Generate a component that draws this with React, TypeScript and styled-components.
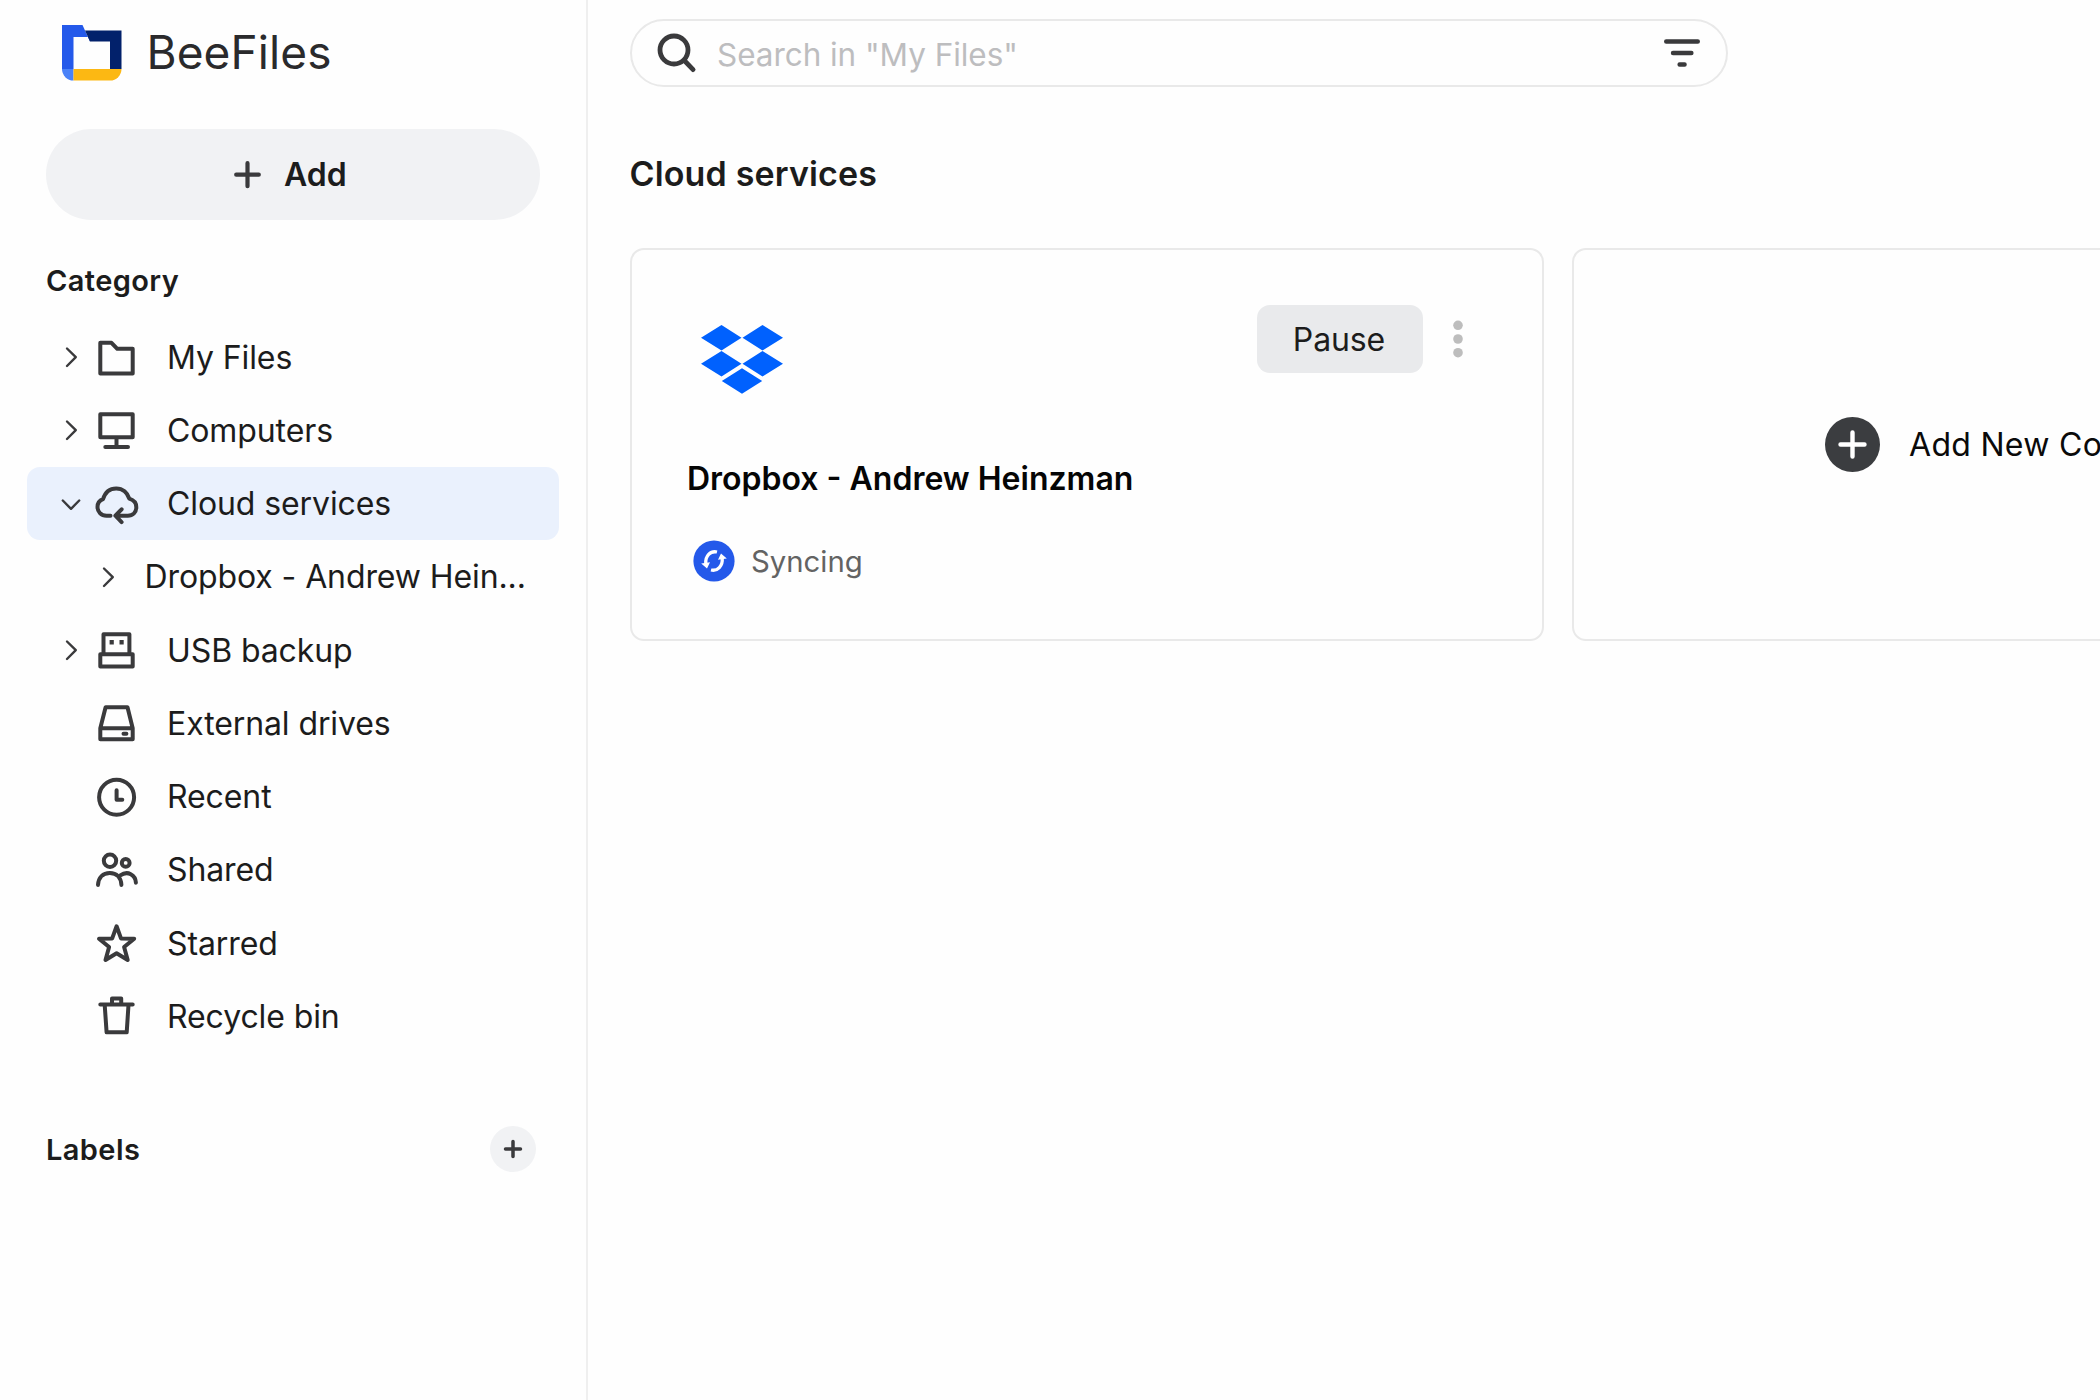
import React from "react";
import styled, { createGlobalStyle } from "styled-components";

const Global = createGlobalStyle`
  * { box-sizing: border-box; }
  html, body { margin: 0; background: #fefefe; overflow: hidden; }
  button { font: inherit; border: 0; padding: 0; background: none; color: inherit; }
`;

const Page = styled.div`
  display: flex;
  width: 2100px;
  height: 1400px;
  overflow: hidden;
  background: #fefefe;
  color: #1c1c1c;
  font-family: Inter, "Liberation Sans", sans-serif;
  font-size: 32px;
  line-height: 1;
`;

const Sidebar = styled.aside`
  flex: none;
  width: 588px;
  border-right: 2px solid #efefef;
`;

const Brand = styled.div`
  display: flex;
  align-items: center;
  gap: 24.5px;
  height: 106px;
  padding-left: 62px;
`;

const BrandName = styled.span`
  padding-bottom: 2px;
  font-size: 46px;
  letter-spacing: 0.1px;
  color: #2a2a2c;
`;

const AddButton = styled.button`
  display: flex;
  align-items: center;
  gap: 23.5px;
  width: 494px;
  height: 91px;
  margin: 23px 0 0 46px;
  padding: 0 0 0 187.5px;
  border-radius: 46px;
  background: #f1f2f4;
  font-weight: 600;
`;

const SectionTitle = styled.h2`
  margin: 0;
  font-size: 29px;
  font-weight: 600;
  letter-spacing: 0.4px;
`;

const CategoryHeader = styled.div`
  padding: 45.5px 0 0 46px;
  height: 100.5px;
`;

const Nav = styled.nav`
  display: flex;
  flex-direction: column;
  padding: 0 27.5px 0 27px;
`;

const NavRow = styled.div<{ $active?: boolean; $child?: boolean }>`
  display: flex;
  align-items: center;
  height: 73.25px;
  padding-left: ${(p) => (p.$child ? 67.5 : 30.5)}px;
  border-radius: 13px;
  background: ${(p) => (p.$active ? "#eaf1fd" : "transparent")};
`;

const ChevronSlot = styled.span<{ $child?: boolean }>`
  display: flex;
  width: 26px;
  margin-right: ${(p) => (p.$child ? 24 : 8.5)}px;
`;

const IconSlot = styled.span`
  display: flex;
  width: 48px;
  margin-right: 27px;
`;

const NavLabel = styled.span`
  padding-top: 1px;
  letter-spacing: -0.1px;
  white-space: nowrap;
`;

const LabelsHeader = styled.div`
  display: flex;
  align-items: center;
  justify-content: space-between;
  height: 46px;
  margin-top: 73px;
  padding: 0 50.5px 0 46px;
`;

const RoundButton = styled.button`
  display: flex;
  align-items: center;
  justify-content: center;
  width: 46px;
  height: 46px;
  border-radius: 50%;
  background: #f1f2f4;
`;

const Main = styled.main`
  flex: 1;
  min-width: 0;
  padding: 19px 0 0 41.5px;
`;

const SearchBar = styled.div`
  display: flex;
  align-items: center;
  width: 1098.5px;
  height: 68px;
  padding: 0 25px 0 23px;
  border: 2px solid #e9e9e9;
  border-radius: 34px;
`;

const Placeholder = styled.span`
  flex: 1;
  margin: 2.5px 0 0 18.5px;
  font-size: 31.5px;
  letter-spacing: -0.05px;
  color: #bdbdbf;
`;

const PageTitle = styled.h1`
  margin: 69px 0 57px;
  font-size: 34px;
  line-height: 35px;
  font-weight: 600;
  letter-spacing: 0.15px;
`;

const Cards = styled.div`
  display: flex;
  gap: 28px;
`;

const Card = styled.section`
  flex: none;
  width: 914px;
  height: 393px;
  border: 2px solid #e9e9e9;
  border-radius: 14px;
`;

const ServiceCard = styled(Card)`
  padding: 55px 78px 0 55px;
`;

const CardTop = styled.div`
  display: flex;
  justify-content: space-between;
  height: 145px;
`;

const Logo = styled.span`
  display: flex;
  padding: 20px 0 0 14px;
`;

const Actions = styled.div`
  display: flex;
  align-items: center;
  gap: 29px;
  height: 68px;
`;

const PauseButton = styled.button`
  width: 166px;
  height: 68px;
  padding: 1px 1px 0 0;
  border-radius: 13px;
  background: #e9eaec;
  letter-spacing: -0.1px;
`;

const ServiceName = styled.h3`
  margin: 13px 0 0 0.5px;
  font-size: 32px;
  font-weight: 600;
  color: #050505;
`;

const Status = styled.div`
  display: flex;
  align-items: center;
  gap: 16px;
  margin: 45px 0 0 6.5px;
  font-size: 29.3px;
  color: #636363;
`;

const StatusText = styled.span`
  padding-top: 1px;
`;

const ConnectCard = styled(Card)`
  display: flex;
  align-items: center;
  padding-left: 251.5px;
  gap: 29px;
  letter-spacing: 0.3px;
  color: #0a0a0a;
  white-space: nowrap;
`;

const Icon = ({ w, h, children, sw = 4 }: { w: number; h: number; sw?: number; children: React.ReactNode }) => (
  <svg width={w} height={h} viewBox={`0 0 ${w} ${h}`} fill="none" stroke="#3a3a3c" strokeWidth={sw} strokeLinecap="round" strokeLinejoin="round">
    {children}
  </svg>
);

const ChevronRight = () => (
  <Icon w={26} h={26} sw={2.4}><path d="M9 4.5 17.8 13.2 9 22" /></Icon>
);
const ChevronDown = () => (
  <Icon w={26} h={26} sw={2.4}><path d="M4.8 9.5 13 17.8 21.2 9.500" /></Icon>
);

const icons: Record<string, React.ReactNode> = {
  folder: <path d="M8.3 9.800h11.200l5.800 6h15.400V40.600H8.300Z" />,
  computer: <path d="M8.300 8.300h32.400V31.300H8.300ZM24.500 31.300v9M13.300 40.900h22.700" />,
  cloud: <path d="M18.500 35.700H14.500C9 35.700 5.500 31.500 5.500 27c0-4 2-6.500 5.500-7.800C13 12.500 17.500 8.400 24.200 8.400S35.500 12.800 37.300 18.700C41.500 20 44.300 23 44.300 27.200c0 5-3.500 8.500-8.500 8.500H24M29.600 29.300 23.400 35.700 29.600 42.100" />,
  usb: (
    <>
      <path d="M11.500 28.200V8.200h25.900v20M8.300 28.200h32.400v12.400H8.300Z" />
      <path d="M17.600 14h4.200v4.500h-4.200ZM27.500 14h4.200v4.500h-4.200Z" fill="#3a3a3c" stroke="none" />
    </>
  ),
  drive: <path d="M13.600 8.300h21.900L40.700 29.300V40.300H8.300V29.300ZM8.300 29.300h32.400M31.500 34.700h2.900" />,
  clock: <><circle cx={24.6} cy={24.2} r={17.5} /><path d="M24.600 17.200v9.600H30.300" /></>,
  people: <><circle cx={18} cy={14.8} r={6.2} /><circle cx={33.7} cy={16.9} r={3.9} /><path d="M6 38.900C6.500 31.500 11 27 17.800 27S29 31.500 29.400 38.900M28.300 29.300c7.500-5 15.200-.5 15.600 7.400" /></>,
  star: <path d="M24.600 7.300 29 19.400 42.200 19.700 32.100 28 35.700 41 24.600 34.300 13.500 41 17.100 28 7 19.700 20.200 19.400Z" />,
  trash: <path d="M8.300 12.600h32.400M20 12.200V6.600h9.200v5.600M12.700 12.900l1.900 27.400H34.700L36.500 12.900" />,
};

const NavIcon = ({ name }: { name: string }) => <Icon w={48} h={48}>{icons[name]}</Icon>;

type Item = { label: string; icon?: string; arrow?: "right" | "down"; child?: boolean };
const items: Item[] = [
  { label: "My Files", icon: "folder", arrow: "right" },
  { label: "Computers", icon: "computer", arrow: "right" },
  { label: "Cloud services", icon: "cloud", arrow: "down" },
  { label: "Dropbox - Andrew Hein...", arrow: "right", child: true },
  { label: "USB backup", icon: "usb", arrow: "right" },
  { label: "External drives", icon: "drive" },
  { label: "Recent", icon: "clock" },
  { label: "Shared", icon: "people" },
  { label: "Starred", icon: "star" },
  { label: "Recycle bin", icon: "trash" },
];

export default function App() {
  return (
    <Page>
      <Global />
      <Sidebar>
        <Brand>
          <svg width="60" height="56" viewBox="0 0 60 56">
            <path d="M0 0h20.500L28 16.500V12H11.500V44H0Z" fill="#2459ea" />
            <path d="M23 5.500H59.500V44H48V16.500H28Z" fill="#02216b" />
            <path d="M0 44h11.500v11.500A11.500 11.500 0 0 1 0 44Z" fill="#4a82f8" />
            <path d="M11.500 44h48a11.500 11.500 0 0 1-11.500 11.500H11.500Z" fill="#fcb813" />
          </svg>
          <BrandName>BeeFiles</BrandName>
        </Brand>
        <AddButton>
          <Icon w={27} h={28} sw={4.2}><path d="M13.500 2.200v23M2.200 13.700h22.600" /></Icon>
          Add
        </AddButton>
        <CategoryHeader><SectionTitle>Category</SectionTitle></CategoryHeader>
        <Nav>
          {items.map((it) => (
            <NavRow key={it.label} $active={it.arrow === "down"} $child={it.child}>
              <ChevronSlot $child={it.child}>
                {it.arrow === "right" && <ChevronRight />}
                {it.arrow === "down" && <ChevronDown />}
              </ChevronSlot>
              {it.icon && <IconSlot><NavIcon name={it.icon} /></IconSlot>}
              <NavLabel>{it.label}</NavLabel>
            </NavRow>
          ))}
        </Nav>
        <LabelsHeader>
          <SectionTitle>Labels</SectionTitle>
          <RoundButton><Icon w={20} h={20} sw={3.5}><path d="M10 2.500v15M2.500 10h15" /></Icon></RoundButton>
        </LabelsHeader>
      </Sidebar>
      <Main>
        <SearchBar>
          <Icon w={44} h={44} sw={4.8}><circle cx={19} cy={19} r={14} /><path d="M29.300 29.500 38.100 38.600" /></Icon>
          <Placeholder>Search in "My Files"</Placeholder>
          <Icon w={38} h={30} sw={4.4}><path d="M3.200 3.500h31.600M10 15h18.400M16.600 26.500h5" /></Icon>
        </SearchBar>
        <PageTitle>Cloud services</PageTitle>
        <Cards>
          <ServiceCard>
            <CardTop>
              <Logo>
                <svg width="82" height="69" viewBox="0 0 82 69" fill="#0061fe">
                  <path d="M20.500 0 40.500 12.700 20.500 25.400 0 12.700ZM61.500 0 82 12.700 61.500 25.400 41.500 12.700ZM20.500 26 40.500 38.700 20.500 51.400 0 38.700ZM61.500 26 82 38.700 61.500 51.400 41.500 38.700ZM41 43.300 61.200 56 41 68.800 20.800 56Z" />
                </svg>
              </Logo>
              <Actions>
                <PauseButton>Pause</PauseButton>
                <svg width="12" height="38" viewBox="0 0 12 38" fill="#bdbdbd">
                  <circle cx="6" cy="5.300" r="4.800" /><circle cx="6" cy="19" r="4.800" /><circle cx="6" cy="32.700" r="4.800" />
                </svg>
              </Actions>
            </CardTop>
            <ServiceName>Dropbox - Andrew Heinzman</ServiceName>
            <Status>
              <svg width="42" height="42" viewBox="0 0 42 42">
                <circle cx="21" cy="21" r="20.600" fill="#2459ea" />
                <g fill="none" stroke="#fff" strokeWidth="3.300">
                  <path d="M24 12C17.500 10.500 12 16 12.800 24M18 30C24.500 31.500 30 26 29.200 18" />
                </g>
                <path d="M8.200 23.600 17 22.200 14 28.600ZM33.800 18.400 25 19.800 28 13.400Z" fill="#fff" />
              </svg>
              <StatusText>Syncing</StatusText>
            </Status>
          </ServiceCard>
          <ConnectCard>
            <svg width="55" height="55" viewBox="0 0 55 55">
              <circle cx="27.500" cy="27.500" r="27.500" fill="#3b3d40" />
              <path d="M27.500 15.500v24M15.500 27.500h24" stroke="#fff" strokeWidth="4.400" strokeLinecap="round" />
            </svg>
            Add New Connection
          </ConnectCard>
        </Cards>
      </Main>
    </Page>
  );
}
